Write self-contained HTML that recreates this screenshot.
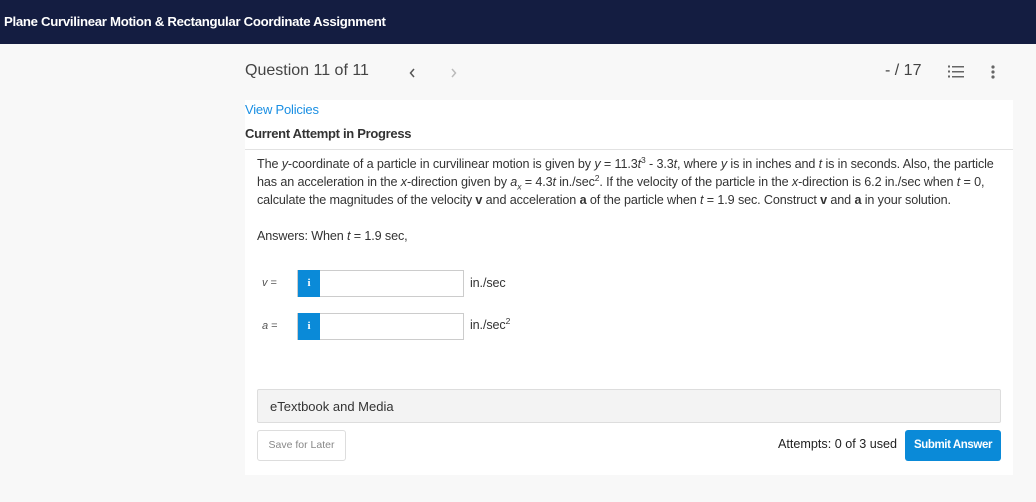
<!DOCTYPE html>
<html><head><style>
*{margin:0;padding:0;box-sizing:border-box}
body{width:1036px;height:502px;background:#f8f8f8;font-family:"Liberation Sans",sans-serif;color:#333;position:relative;overflow:hidden}
.hdr{position:absolute;left:0;top:0;width:1036px;height:44px;background:#141d41;color:#fff;font-weight:bold;font-size:13.2px;letter-spacing:-0.3px;padding:14px 0 0 4px}
.a{position:absolute;white-space:nowrap}
.panel{position:absolute;left:245px;top:100px;width:768px;height:375px;background:#fff}
.txt{font-size:12.6px;letter-spacing:-0.12px;line-height:18px;color:#333}
sup,sub{line-height:0;font-size:8.5px}
.inp{position:absolute;width:167px;height:27px;border:1px solid #ccc;background:#fff}
.info{position:absolute;left:0;top:-1px;width:22px;height:27px;background:#0a8ad8;color:#fff;font-weight:bold;font-size:11px;text-align:center;line-height:27px;font-family:"Liberation Serif",serif}
</style></head><body>
<div class="hdr">Plane Curvilinear Motion &amp; Rectangular Coordinate Assignment</div>
<div class="a" style="left:245px;top:62px;font-size:16px;color:#444">Question 11 of 11</div>
<svg class="a" style="left:408px;top:67px" width="8" height="12"><path d="M6 2 L2.5 6 L6 10" fill="none" stroke="#555" stroke-width="1.5"/></svg>
<svg class="a" style="left:450px;top:67px" width="8" height="12"><path d="M2 2 L5.5 6 L2 10" fill="none" stroke="#bbb" stroke-width="1.5"/></svg>
<div class="a" style="left:885px;top:62px;font-size:16px;color:#444">- / 17</div>
<svg class="a" style="left:947px;top:64px" width="18" height="16"><g fill="#666"><rect x="5" y="2" width="12" height="1.5"/><rect x="5" y="7" width="12" height="1.5"/><rect x="5" y="12" width="12" height="1.5"/><rect x="1" y="1.5" width="2" height="2"/><rect x="1" y="6.5" width="2" height="2"/><rect x="1" y="11.5" width="2" height="2"/></g></svg>
<svg class="a" style="left:990px;top:64px" width="6" height="16"><g fill="#666"><circle cx="3" cy="3" r="1.6"/><circle cx="3" cy="8" r="1.6"/><circle cx="3" cy="13" r="1.6"/></g></svg>
<div class="panel"></div>
<div class="a" style="left:245px;top:102px;font-size:13px;color:#1a8fe3;letter-spacing:-0.2px">View Policies</div>
<div class="a" style="left:245px;top:126px;font-size:13px;font-weight:bold;color:#333;letter-spacing:-0.3px">Current Attempt in Progress</div>
<div class="a" style="left:245px;top:149px;width:768px;height:1px;background:#e2e2e2"></div>
<div class="a txt" style="left:257px;top:155px">The <i>y</i>-coordinate of a particle in curvilinear motion is given by <i>y</i> = 11.3<i>t</i><sup>3</sup> - 3.3<i>t</i>, where <i>y</i> is in inches and <i>t</i> is in seconds. Also, the particle<br>has an acceleration in the <i>x</i>-direction given by <i>a<sub>x</sub></i> = 4.3<i>t</i> in./sec<sup>2</sup>. If the velocity of the particle in the <i>x</i>-direction is 6.2 in./sec when <i>t</i> = 0,<br>calculate the magnitudes of the velocity <b>v</b> and acceleration <b>a</b> of the particle when <i>t</i> = 1.9 sec. Construct <b>v</b> and <b>a</b> in your solution.</div>
<div class="a txt" style="left:257px;top:227px">Answers: When <i>t</i> = 1.9 sec,</div>
<div class="a" style="left:262px;top:277px;font-size:11px;color:#555"><i>v</i> =</div>
<div class="inp" style="left:297px;top:270px"><div class="info">i</div></div>
<div class="a txt" style="left:470px;top:274px">in./sec</div>
<div class="a" style="left:262px;top:320px;font-size:11px;color:#555"><i>a</i> =</div>
<div class="inp" style="left:297px;top:313px"><div class="info">i</div></div>
<div class="a txt" style="left:470px;top:316px">in./sec<sup>2</sup></div>
<div class="a" style="left:257px;top:389px;width:744px;height:34px;background:#f3f3f3;border:1px solid #ddd;border-radius:2px;font-size:13px;padding:9px 0 0 12px;color:#333">eTextbook and Media</div>
<div class="a" style="left:257px;top:430px;width:89px;height:31px;border:1px solid #ddd;border-radius:3px;font-size:10.5px;color:#888;text-align:center;line-height:29px">Save for Later</div>
<div class="a" style="left:778px;top:437px;font-size:12.6px;color:#222;letter-spacing:0">Attempts: 0 of 3 used</div>
<div class="a" style="left:905px;top:430px;width:96px;height:31px;background:#0a8ad8;border-radius:3px;font-size:11.5px;font-weight:bold;color:#fff;text-align:center;line-height:31px;letter-spacing:-0.4px">Submit Answer</div>
</body></html>
